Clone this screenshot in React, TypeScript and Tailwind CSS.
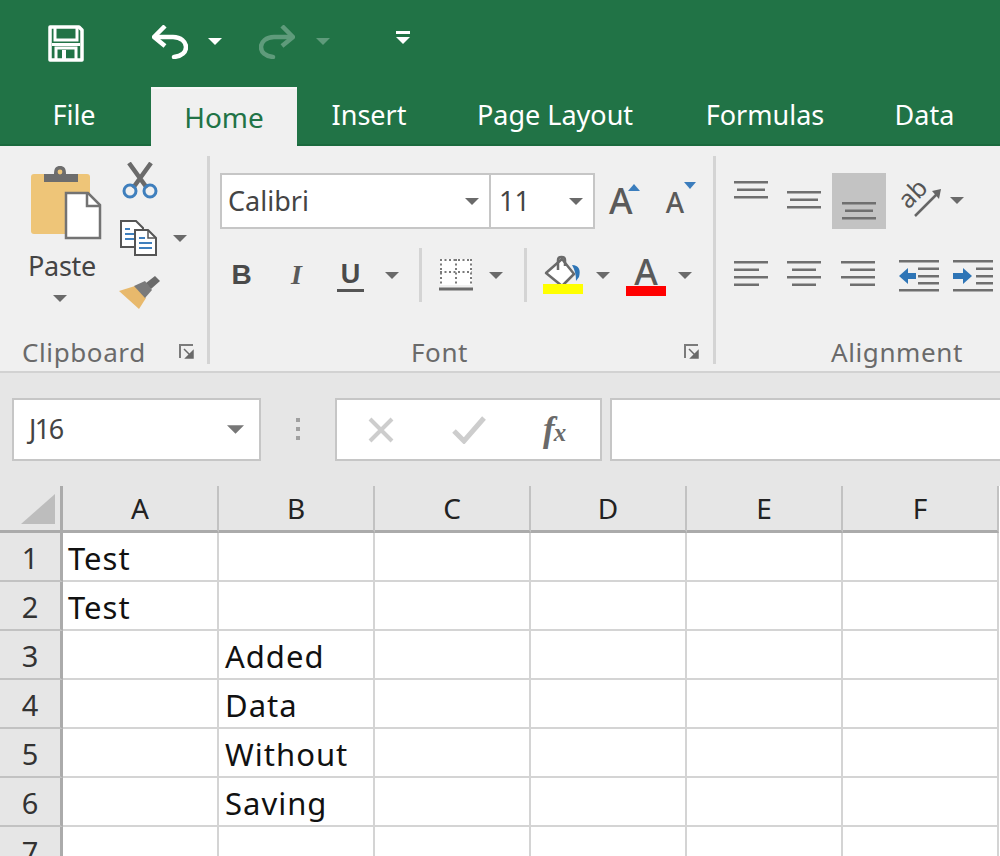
import React from "react";

const Caret = ({ c = "#6a6a6a", w = 14, h = 7 }: { c?: string; w?: number; h?: number }) => (
  <svg width={w} height={h} viewBox="0 0 14 7" className="block shrink-0">
    <path d="M0 0H14L7 7Z" fill={c} />
  </svg>
);

const Launcher = () => (
  <svg width="18" height="16" viewBox="0 0 18 16" className="block">
    <path d="M1 14V1H14" fill="none" stroke="#7b7b7b" strokeWidth="2" />
    <path d="M5 5L13 13M14 7V14H7Z" fill="#6a6a6a" stroke="#6a6a6a" strokeWidth="1.5" />
  </svg>
);

const Save = () => (
  <svg width="36" height="37" viewBox="0 0 36 37" className="block">
    <path d="M2 2H31L34 5V35H2Z" fill="none" stroke="#fff" strokeWidth="3.5" strokeLinejoin="round" />
    <path d="M7 3V15H29V3" fill="none" stroke="#fff" strokeWidth="3" />
    <path d="M8 34V23H28V34" fill="none" stroke="#fff" strokeWidth="3" />
    <rect x="14" y="25" width="4" height="9" fill="#fff" />
    <path d="M4 18H32V21H4Z" fill="#fff" />
  </svg>
);

const UndoIcon = ({ c = "#fff" }: { c?: string }) => (
  <svg width="36" height="34" viewBox="0 0 36 34" className="block">
    <path d="M13 1L2 12L13 21" fill="none" stroke={c} strokeWidth="4.5" strokeLinejoin="round" />
    <path d="M4 12H21C29 12 34 17 34 22C34 27 30 31 22 32" fill="none" stroke={c} strokeWidth="4.5" strokeLinecap="round" />
  </svg>
);

const Paste = () => (
  <svg width="72" height="76" viewBox="0 0 72 76" className="block">
    <rect x="0" y="9" width="59" height="60" rx="3" fill="#eec578" />
    <path d="M13 9H23C23 3 25 1 29 1C33 1 35 3 35 9H47V17H13Z" fill="#6d6d6d" />
    <circle cx="29" cy="7" r="2.4" fill="#eec578" />
    <path d="M35 28H57L69 40V73H35Z" fill="#fff" stroke="#737373" strokeWidth="2.5" />
    <path d="M56 28V41H69" fill="none" stroke="#737373" strokeWidth="2.5" />
  </svg>
);

const Scissors = () => (
  <svg width="36" height="38" viewBox="0 0 36 38" className="block">
    <path d="M7 1L25 26M29 1L11 26" stroke="#6a6a6a" strokeWidth="4.5" fill="none" />
    <circle cx="8" cy="29" r="6" fill="none" stroke="#3f7fbd" strokeWidth="3" />
    <circle cx="28" cy="29" r="6" fill="none" stroke="#3f7fbd" strokeWidth="3" />
  </svg>
);

const Copy = () => (
  <svg width="40" height="36" viewBox="0 0 40 36" className="block">
    <path d="M2 1H17L24 8V27H2Z" fill="#fff" stroke="#555" strokeWidth="2" />
    <path d="M6 9H11M6 14H18M6 19H18" stroke="#3f7fbd" strokeWidth="2" />
    <path d="M16 10H29L37 18V35H16Z" fill="#fff" stroke="#555" strokeWidth="2" />
    <path d="M29 10V18H37" fill="none" stroke="#555" strokeWidth="1.5" />
    <path d="M20 18H26M20 23H33M20 28H33" stroke="#3f7fbd" strokeWidth="2" />
  </svg>
);

const Brush = () => (
  <svg width="42" height="36" viewBox="0 0 42 36" className="block">
    <path d="M0 16L16 11L27 23L20 34Z" fill="#e8b96c" />
    <path d="M15 11L26 6L33 15L26 23Z" fill="#7a7a7a" />
    <path d="M27 8L36 1L41 6L32 14Z" fill="#6a6a6a" />
  </svg>
);

const BordersIcon = () => (
  <svg width="34" height="34" viewBox="0 0 34 34" className="block">
    <rect x="1" y="1" width="32" height="26" fill="#fff" />
    <path d="M1 2H33M1 14H33M2 1V28M17 1V28M32 1V28" stroke="#7a7a7a" strokeWidth="2" strokeDasharray="2 2.5" fill="none" />
    <path d="M0 31H34" stroke="#6a6a6a" strokeWidth="3" />
  </svg>
);

const Fill = () => (
  <svg width="40" height="40" viewBox="0 0 40 40" className="block">
    <path d="M3 18L19 4L31 19L19 31Z" fill="#fff" stroke="#6a6a6a" strokeWidth="2.5" strokeLinejoin="round" />
    <path d="M15 15V5C15 1 22 1 22 5V11" fill="none" stroke="#6a6a6a" strokeWidth="2.5" />
    <path d="M29 10C36 10 38 15 36 22L33 26C33 20 32 15 29 10Z" fill="#2e75b6" />
    <rect x="0" y="29" width="40" height="10" fill="#ffff00" />
  </svg>
);

const Lines = ({ rows, c = "#6f6f6f" }: { rows: [number, number][]; c?: string }) => (
  <svg width="36" height={rows.length * 8} viewBox={`0 0 36 ${rows.length * 8}`} className="block">
    {rows.map(([a, b], i) => (
      <rect key={i} x={a} y={i * 7.5 + 1} width={b - a} height="2.5" fill={c} />
    ))}
  </svg>
);

const Orient = () => (
  <svg width="44" height="38" viewBox="0 0 44 38" className="block overflow-visible">
    <path d="M16 35L38 13" stroke="#666" strokeWidth="2.5" />
    <path d="M33 10L42 8L40 18Z" fill="#666" />
    <text x="14" y="21" textAnchor="middle" transform="rotate(-45 14 13)" fontFamily="'Noto Sans', sans-serif" fontSize="25" fill="#555">ab</text>
  </svg>
);

const Indent = ({ out }: { out?: boolean }) => (
  <svg width="42" height="34" viewBox="0 0 42 34" className="block">
    <rect x="1" y="1" width="40" height="2.5" fill="#6f6f6f" />
    <rect x="1" y="30" width="40" height="2.5" fill="#6f6f6f" />
    {out ? (
      <>
        <rect x="20" y="8.5" width="21" height="2.5" fill="#6f6f6f" />
        <rect x="20" y="16" width="21" height="2.5" fill="#6f6f6f" />
        <rect x="20" y="23" width="21" height="2.5" fill="#6f6f6f" />
        <path d="M1 17L10 9V14H18V20H10V25Z" fill="#2e75b6" />
      </>
    ) : (
      <>
        <rect x="24" y="8.5" width="17" height="2.5" fill="#6f6f6f" />
        <rect x="24" y="16" width="17" height="2.5" fill="#6f6f6f" />
        <rect x="24" y="23" width="17" height="2.5" fill="#6f6f6f" />
        <path d="M20 17L11 9V14H1V20H11V25Z" fill="#2e75b6" />
      </>
    )}
  </svg>
);

const ui = "font-['Noto_Sans','Open_Sans',sans-serif]";
const left: [number, number][] = [[0, 34], [0, 25], [0, 34], [0, 25]];
const center: [number, number][] = [[0, 34], [5, 29], [0, 34], [5, 29]];
const right: [number, number][] = [[0, 34], [9, 34], [0, 34], [9, 34]];
const three: [number, number][] = [[0, 34], [3, 31], [0, 34]];

const Tab = ({ label, w }: { label: string; w: string }) => (
  <div className={`${w} flex h-full items-center justify-center text-[27px] text-white`}>{label}</div>
);

const columns = ["A", "B", "C", "D", "E", "F"];
const rows: [string, string, string][] = [
  ["1", "Test", ""],
  ["2", "Test", ""],
  ["3", "", "Added"],
  ["4", "", "Data"],
  ["5", "", "Without"],
  ["6", "", "Saving"],
  ["7", "", ""],
];

const groupLabel = "text-[26px] tracking-[0.6px] text-[#6a6a6a]";
const cellText = "flex h-[49px] items-center border-r-2 border-b-2 border-[#d4d4d4] pt-[3px] text-[31px] tracking-[1px] text-[#111]";

export default function App() {
  return (
    <div className={`${ui} flex h-[856px] w-[1000px] flex-col overflow-hidden bg-white`}>
      {/* Title bar and tabs */}
      <header className="h-[146px] shrink-0 bg-[#217346]">
        <div className="flex h-[87px] items-start pt-[24px]">
          <div className="ml-[48px] mt-[1px]"><Save /></div>
          <div className="ml-[68px] mt-[1px]"><UndoIcon /></div>
          <div className="ml-[20px] mt-[14px]"><Caret c="#fff" /></div>
          <div className="ml-[37px] mt-[1px] -scale-x-100"><UndoIcon c="#5f9b7b" /></div>
          <div className="ml-[21px] mt-[14px]"><Caret c="#5f9b7b" /></div>
          <div className="ml-[66px] mt-[7px] flex flex-col items-center gap-[3px]">
            <div className="h-[3px] w-[14px] bg-white" />
            <Caret c="#fff" />
          </div>
        </div>
        <div className="flex h-[59px] items-stretch border-b-2 border-[#1b6a3e]">
          <div className="flex w-[151px] items-center justify-center pr-[3px] text-[27px] text-white">File</div>
          <div className="flex h-[60px] w-[146px] items-center justify-center border-t-2 border-[#f7f7f7] bg-[#f0f0f0] pb-[3px] text-[28px] text-[#217346]">Home</div>
          <Tab label="Insert" w="w-[144px]" />
          <Tab label="Page Layout" w="w-[228px]" />
          <Tab label="Formulas" w="w-[192px]" />
          <Tab label="Data" w="w-[127px]" />
        </div>
      </header>

      {/* Ribbon */}
      <section className="flex h-[227px] shrink-0 border-b-2 border-[#d2d2d2] bg-[#f0f0f0] pt-[10px]">
        {/* Clipboard */}
        <div className="flex h-[210px] w-[207px] shrink-0 flex-col">
          <div className="flex h-[172px]">
            <div className="ml-[20px] flex w-[84px] flex-col items-center pt-[9px]">
              <div className="ml-[10px]"><Paste /></div>
              <div className="mt-[6px] text-[27px] leading-[38px] tracking-[-0.3px] text-[#444]">Paste</div>
              <div className="mt-[10px] -ml-[4px]"><Caret /></div>
            </div>
            <div className="ml-[15px] flex flex-col">
              <div className="mt-[6px] ml-[3px]"><Scissors /></div>
              <div className="mt-[20px] flex items-center">
                <Copy />
                <div className="ml-[14px]"><Caret /></div>
              </div>
              <div className="mt-[19px]"><Brush /></div>
            </div>
          </div>
          <div className="flex h-[38px] items-center pt-[10px]">
            <span className={`ml-[22px] ${groupLabel}`}>Clipboard</span>
            <div className="ml-[33px]"><Launcher /></div>
          </div>
        </div>
        <div className="h-[208px] w-[3px] shrink-0 bg-[#d4d4d4]" />

        {/* Font */}
        <div className="flex h-[210px] w-[503px] shrink-0 flex-col">
          <div className="flex h-[172px] flex-col pl-[10px] pt-[17px]">
            <div className="flex items-center">
              <div className="flex h-[56px] w-[271px] items-center justify-between border-2 border-[#c6c6c6] bg-white pl-[6px] pr-[10px] text-[27px] text-[#444]">
                <span>Calibri</span>
                <Caret />
              </div>
              <div className="-ml-[2px] flex h-[56px] w-[106px] items-center justify-between border-2 border-[#c6c6c6] bg-white pl-[8px] pr-[10px] text-[27px] text-[#444]">
                <span>11</span>
                <Caret />
              </div>
              <div className="ml-[14px] flex w-[40px] items-end justify-start">
                <span className="text-[36px] font-medium leading-[44px] text-[#5a5a5a]">A</span>
                <svg width="12" height="7" viewBox="0 0 12 7" className="-ml-[5px] mb-[32px] block"><path d="M0 7H12L6 0Z" fill="#3b7dbd" /></svg>
              </div>
              <div className="ml-[15px] flex w-[34px] items-end justify-center">
                <span className="text-[28px] font-medium leading-[38px] text-[#5a5a5a]">A</span>
                <svg width="12" height="7" viewBox="0 0 12 7" className="mb-[32px] block"><path d="M0 0H12L6 7Z" fill="#3b7dbd" /></svg>
              </div>
            </div>
            <div className="mt-[19px] flex h-[54px] items-center">
              <span className="ml-[8px] w-[27px] text-center font-['Liberation_Sans','sans-serif'] text-[28px] font-bold text-[#4a4a4a]">B</span>
              <span className="ml-[28px] w-[27px] text-center font-['Liberation_Serif','serif'] text-[28px] font-bold italic text-[#5a5a5a]">I</span>
              <span className="ml-[27px] w-[27px] border-b-[3px] border-[#555] text-center font-['Liberation_Sans','sans-serif'] text-[27px] font-bold leading-[30px] text-[#4a4a4a]">U</span>
              <div className="ml-[21px]"><Caret /></div>
              <div className="ml-[20px] h-[54px] w-[3px] bg-[#d4d4d4]" />
              <div className="ml-[17px]"><BordersIcon /></div>
              <div className="ml-[16px]"><Caret /></div>
              <div className="ml-[21px] h-[54px] w-[3px] bg-[#d4d4d4]" />
              <div className="ml-[16px]"><Fill /></div>
              <div className="ml-[13px]"><Caret /></div>
              <div className="ml-[16px] flex w-[40px] flex-col items-center">
                <span className="h-[31px] text-[36px] font-medium leading-[34px] text-[#5a5a5a]">A</span>
                <div className="h-[10px] w-[40px] bg-[#ff0000]" />
              </div>
              <div className="ml-[12px]"><Caret /></div>
            </div>
          </div>
          <div className="flex h-[38px] items-center pt-[10px]">
            <span className={`ml-[201px] ${groupLabel}`}>Font</span>
            <div className="ml-[216px]"><Launcher /></div>
          </div>
        </div>
        <div className="h-[208px] w-[3px] shrink-0 bg-[#d4d4d4]" />

        {/* Alignment */}
        <div className="flex h-[210px] min-w-0 flex-1 flex-col">
          <div className="flex h-[172px] flex-col pl-[18px] pt-[17px]">
            <div className="flex h-[56px]">
              <div className="w-[53px] pt-[7px]"><Lines rows={three} /></div>
              <div className="w-[45px] pt-[17px]"><Lines rows={three} /></div>
              <div className="flex h-[56px] w-[54px] justify-center bg-[#c3c3c3] pl-[2px] pt-[28px]"><Lines rows={three} /></div>
              <div className="ml-[13px] pt-[8px]"><Orient /></div>
              <div className="ml-[7px] pt-[24px]"><Caret /></div>
            </div>
            <div className="mt-[30px] flex h-[34px] items-center">
              <div className="w-[53px]"><Lines rows={left} /></div>
              <div className="w-[54px]"><Lines rows={center} /></div>
              <div className="w-[57px]"><Lines rows={right} /></div>
              <div className="w-[54px]"><Indent out /></div>
              <Indent />
            </div>
          </div>
          <div className="flex h-[38px] items-center pt-[10px]">
            <span className={`ml-[115px] ${groupLabel}`}>Alignment</span>
          </div>
        </div>
      </section>

      {/* Formula bar */}
      <section className="flex h-[113px] shrink-0 items-start bg-[#e6e6e6] pt-[25px]">
        <div className="ml-[12px] flex h-[63px] w-[249px] items-center justify-between border-2 border-[#c6c6c6] bg-white pl-[15px] pr-[15px] text-[27px] tracking-[-1.5px] text-[#444]">
          <span>J16</span>
          <Caret c="#777" w={17} h={9} />
        </div>
        <div className="ml-[35px] mt-[20px] flex w-[4px] flex-col gap-[5px]">
          <div className="h-[4px] w-[4px] bg-[#a0a0a0]" />
          <div className="h-[4px] w-[4px] bg-[#a0a0a0]" />
          <div className="h-[4px] w-[4px] bg-[#a0a0a0]" />
        </div>
        <div className="ml-[35px] flex h-[63px] w-[267px] items-center border-2 border-[#c6c6c6] bg-white">
          <svg width="26" height="26" viewBox="0 0 26 26" className="ml-[31px] block"><path d="M2 2L24 24M24 2L2 24" stroke="#cdcdcd" strokeWidth="4" /></svg>
          <svg width="34" height="28" viewBox="0 0 34 28" className="ml-[58px] block"><path d="M2 15L12 25L32 2" fill="none" stroke="#cdcdcd" strokeWidth="5" /></svg>
          <span className="ml-[57px] font-['Liberation_Serif','serif'] text-[35px] font-bold italic leading-none tracking-[-1px] text-[#6a6a6a]">f<span className="text-[25px]">x</span></span>
        </div>
        <div className="ml-[8px] h-[63px] flex-1 border-y-2 border-l-2 border-[#c6c6c6] bg-white" />
      </section>

      {/* Grid */}
      <main className="grid flex-1 grid-cols-[63px_repeat(6,156px)] content-start bg-white">
        <div className="relative h-[47px] border-r-[3px] border-b-[3px] border-[#ababab] bg-[#e6e6e6]">
          <svg width="34" height="30" viewBox="0 0 34 30" className="absolute right-[5px] bottom-[6px] block"><path d="M34 0V30H0Z" fill="#bdbdbd" /></svg>
        </div>
        {columns.map((c) => (
          <div key={c} className="flex h-[47px] items-center justify-center border-r-2 border-b-[3px] border-r-[#c2c2c2] border-b-[#ababab] bg-[#e6e6e6] text-[28px] text-[#222]">
            {c}
          </div>
        ))}
        {rows.map(([n, a, b]) => (
          <React.Fragment key={n}>
            <div className="flex h-[49px] items-center justify-center border-r-[3px] border-b-2 border-r-[#ababab] border-b-[#c2c2c2] bg-[#e6e6e6] pt-[3px] text-[29px] text-[#333]">
              {n}
            </div>
            <div className={`${cellText} pl-[5px]`}>{a}</div>
            <div className={`${cellText} pl-[6px]`}>{b}</div>
            {[0, 1, 2, 3].map((i) => (
              <div key={i} className="h-[49px] border-r-2 border-b-2 border-[#d4d4d4]" />
            ))}
          </React.Fragment>
        ))}
      </main>
    </div>
  );
}
